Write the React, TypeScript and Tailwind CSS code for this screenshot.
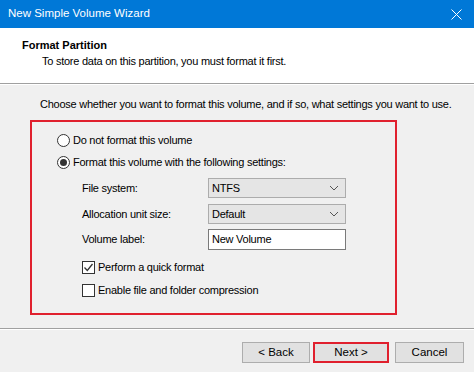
import React from "react";

const font = { fontFamily: '"Liberation Sans", Arial, sans-serif' };

function Chevron() {
  return (
    <svg width="10" height="6" viewBox="0 0 10 6" className="shrink-0">
      <path d="M1 1 L5 5 L9 1" fill="none" stroke="#555" strokeWidth="1" />
    </svg>
  );
}

function Select({ value }: { value: string }) {
  return (
    <div className="flex h-[20px] w-[138px] shrink-0 items-center justify-between border border-[#acacac] bg-[#e5e5e5] pl-[3px] pr-[6px] text-black">
      <span>{value}</span>
      <Chevron />
    </div>
  );
}

function Radio({ checked }: { checked?: boolean }) {
  return (
    <div className="flex h-[13px] w-[13px] shrink-0 items-center justify-center rounded-full border border-[#333] bg-white">
      {checked && <div className="h-[7px] w-[7px] rounded-full bg-[#333]" />}
    </div>
  );
}

function Check({ checked }: { checked?: boolean }) {
  return (
    <div className="flex h-[13px] w-[13px] shrink-0 items-center justify-center border border-[#333] bg-white">
      {checked && (
        <svg width="11" height="11" viewBox="0 0 11 11">
          <path d="M1.5 5.5 L4.3 8.5 L9.5 2" fill="none" stroke="#333" strokeWidth="1.3" />
        </svg>
      )}
    </div>
  );
}

function Button({ label, primary, w }: { label: string; primary?: boolean; w: string }) {
  return (
    <div
      className={`flex h-[21px] items-center justify-center bg-[#e1e1e1] text-[11.5px] text-black ${w} ${
        primary ? "border-2 border-[#e0202e]" : "border border-[#adadad]"
      }`}
    >
      {label}
    </div>
  );
}

export default function App() {
  return (
    <div className="flex h-[372px] w-[474px] flex-col overflow-hidden bg-[#f0f0f0] text-black" style={font}>
      <div className="flex h-[28px] shrink-0 items-center justify-between bg-[#0078d7] pl-[8px] pr-[12px] text-[11.5px] text-white">
        <span>New Simple Volume Wizard</span>
        <svg width="11" height="11" viewBox="0 0 11 11">
          <path d="M0.5 0.5 L10.5 10.5 M10.5 0.5 L0.5 10.5" stroke="white" strokeWidth="1" />
        </svg>
      </div>
      <div className="flex h-[55px] shrink-0 flex-col bg-white pl-[22px] pt-[10px]">
        <div className="text-[11px] font-bold leading-[14px]">Format Partition</div>
        <div className="mt-[2px] whitespace-nowrap pl-[20px] text-[11px] leading-[14px] tracking-[-0.25px]">
          To store data on this partition, you must format it first.
        </div>
      </div>
      <div className="h-px shrink-0 bg-[#a0a0a0]" />
      <div className="h-px shrink-0 bg-white" />
      <div className="flex flex-1 flex-col text-[11px] tracking-[-0.25px]">
        <div className="whitespace-nowrap pl-[40px] pt-[12px] leading-[14px]">
          Choose whether you want to format this volume, and if so, what settings you want to use.
        </div>
        <div className="ml-[30px] mt-[9px] flex h-[195px] w-[367px] shrink-0 flex-col border-2 border-[#e0202e] pl-[25px] pt-[8px]">
          <div className="flex h-[20px] items-center gap-[3px] whitespace-nowrap">
            <Radio />
            <span>Do not format this volume</span>
          </div>
          <div className="mt-[2px] flex h-[20px] items-center gap-[3px] whitespace-nowrap">
            <Radio checked />
            <span>Format this volume with the following settings:</span>
          </div>
          <div className="mt-[6px] flex flex-col gap-[5px] pl-[25px]">
            <div className="flex items-center">
              <span className="w-[126px] shrink-0">File system:</span>
              <Select value="NTFS" />
            </div>
            <div className="mt-[1px] flex items-center">
              <span className="w-[126px] shrink-0">Allocation unit size:</span>
              <Select value="Default" />
            </div>
            <div className="flex items-center">
              <span className="w-[126px] shrink-0">Volume label:</span>
              <div className="flex h-[21px] w-[138px] shrink-0 items-center border border-[#7a7a7a] bg-white pl-[3px]">
                New Volume
              </div>
            </div>
          </div>
          <div className="mt-[7px] flex h-[20px] items-center gap-[3px] whitespace-nowrap pl-[25px]">
            <Check checked />
            <span>Perform a quick format</span>
          </div>
          <div className="mt-[3px] flex h-[20px] items-center gap-[3px] whitespace-nowrap pl-[25px]">
            <Check />
            <span>Enable file and folder compression</span>
          </div>
        </div>
        <div className="mt-[13px] h-px shrink-0 bg-[#a0a0a0]" />
        <div className="h-px shrink-0 bg-white" />
        <div className="flex items-start pl-[242px] pt-[12px] tracking-normal">
          <Button label="< Back" w="w-[68px]" />
          <div className="ml-[3px]">
            <Button label="Next >" primary w="w-[76px]" />
          </div>
          <div className="ml-[6px]">
            <Button label="Cancel" w="w-[69px]" />
          </div>
        </div>
      </div>
    </div>
  );
}
